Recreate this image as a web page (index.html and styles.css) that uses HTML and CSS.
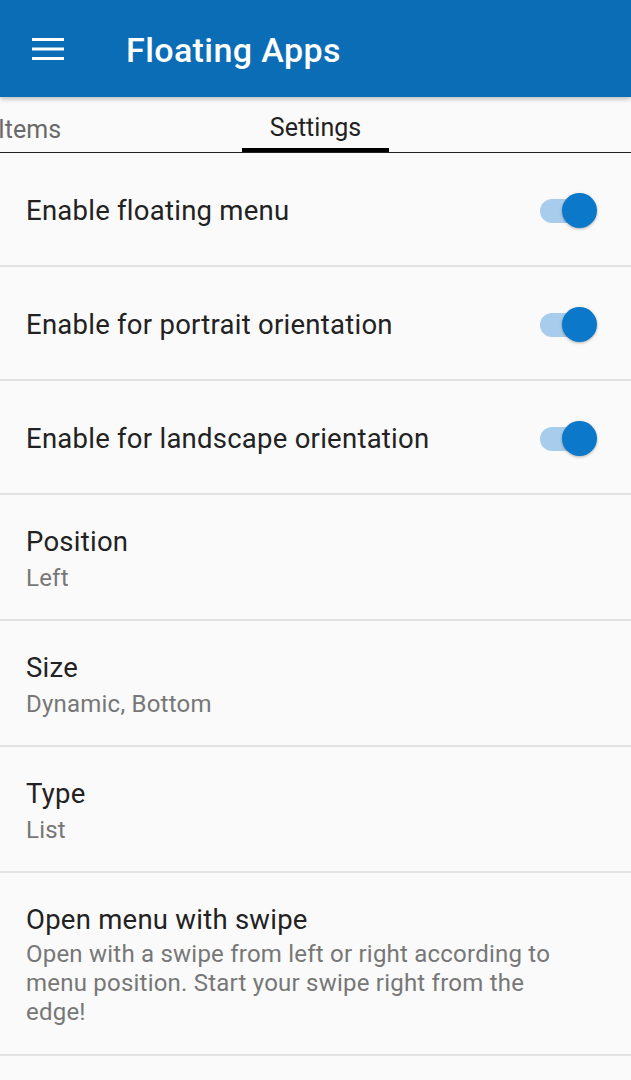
FILE: index.html
```html
<!DOCTYPE html>
<html>
<head>
<meta charset="utf-8">
<link rel="stylesheet" href="styles.css">
</head>
<body>
<header class="appbar">
  <svg class="menu-icon" width="32" height="24" viewBox="0 0 32 24">
    <rect x="0" y="1" width="32" height="3" fill="#fff"/>
    <rect x="0" y="10.5" width="32" height="3" fill="#fff"/>
    <rect x="0" y="20" width="32" height="3" fill="#fff"/>
  </svg>
  <h1 class="title">Floating Apps</h1>
</header>
<nav class="tabs">
  <div class="tab tab-items">Items</div>
  <div class="tab tab-active">Settings</div>
</nav>
<ul class="settings">
  <li class="row row-toggle">
    <span class="row-title">Enable floating menu</span>
    <span class="switch"><span class="track"></span><span class="thumb"></span></span>
  </li>
  <li class="row row-toggle">
    <span class="row-title">Enable for portrait orientation</span>
    <span class="switch"><span class="track"></span><span class="thumb"></span></span>
  </li>
  <li class="row row-toggle">
    <span class="row-title">Enable for landscape orientation</span>
    <span class="switch"><span class="track"></span><span class="thumb"></span></span>
  </li>
  <li class="row row-two">
    <span class="row-title">Position</span>
    <span class="row-sub">Left</span>
  </li>
  <li class="row row-two">
    <span class="row-title">Size</span>
    <span class="row-sub">Dynamic, Bottom</span>
  </li>
  <li class="row row-two">
    <span class="row-title">Type</span>
    <span class="row-sub">List</span>
  </li>
  <li class="row row-multi">
    <span class="row-title">Open menu with swipe</span>
    <span class="row-sub">Open with a swipe from left or right according to menu position. Start your swipe right from the edge!</span>
  </li>
</ul>
</body>
</html>
```
FILE: styles.css
```css
html, body {
  margin: 0;
  padding: 0;
  background: #fafafa;
  font-family: Roboto, "Noto Sans", sans-serif;
  overflow: hidden;
}
.appbar {
  height: 97px;
  background: #0b6db5;
  display: flex;
  align-items: center;
  padding-left: 32px;
  box-shadow: 0 2px 5px rgba(0,0,0,0.25);
  position: relative;
  z-index: 2;
}
.menu-icon {
  display: block;
  margin-top: 1px;
}
.title {
  margin: 2px 0 0 62px;
  color: #fff;
  font-size: 34px;
  font-weight: 500;
  letter-spacing: 0.4px;
}
.tabs {
  display: flex;
  border-bottom: 1px solid #222;
  box-sizing: border-box;
  height: 56px;
}
.tab {
  font-size: 25px;
  color: #666;
  display: flex;
  align-items: center;
  box-sizing: border-box;
  padding-top: 10px;
}
.tab-items {
  width: 242px;
  margin-left: -2px;
  color: #6a6a6a;
}
.tab-active {
  width: 147px;
  justify-content: center;
  color: #222;
  border-bottom: 4px solid #000;
  margin-left: 2px;
}
.settings {
  list-style: none;
  margin: 0;
  padding: 0;
}
.row {
  border-bottom: 2px solid #e2e2e2;
  padding-left: 26px;
  box-sizing: border-box;
}
.row-title {
  font-size: 27.5px;
  color: #222;
  letter-spacing: 0.25px;
}
.row-sub {
  font-size: 24px;
  color: #777;
  letter-spacing: 0.22px;
}
.row-toggle {
  height: 114px;
  display: flex;
  align-items: center;
  justify-content: space-between;
  padding-right: 34px;
  padding-top: 2px;
}
.row-two {
  height: 126px;
  display: flex;
  flex-direction: column;
  justify-content: center;
  padding-top: 5px;
}
.row-two .row-title {
  line-height: 34px;
}
.row-two .row-sub {
  line-height: 34px;
  margin-top: 2px;
}
.row-multi {
  height: 183px;
  display: flex;
  flex-direction: column;
  padding-top: 30px;
  padding-right: 60px;
}
.row-multi .row-title {
  line-height: 34px;
  margin-bottom: 3px;
}
.row-multi .row-sub {
  line-height: 29px;
}
.switch {
  position: relative;
  width: 57px;
  height: 35px;
  flex: none;
}
.track {
  position: absolute;
  left: 0;
  top: 6px;
  width: 50px;
  height: 24px;
  border-radius: 12px;
  background: #a8cdec;
}
.thumb {
  position: absolute;
  right: 0;
  top: 0;
  width: 35px;
  height: 35px;
  border-radius: 50%;
  background: #0b78c9;
  box-shadow: 0 1px 3px rgba(0,0,0,0.3);
}
```
